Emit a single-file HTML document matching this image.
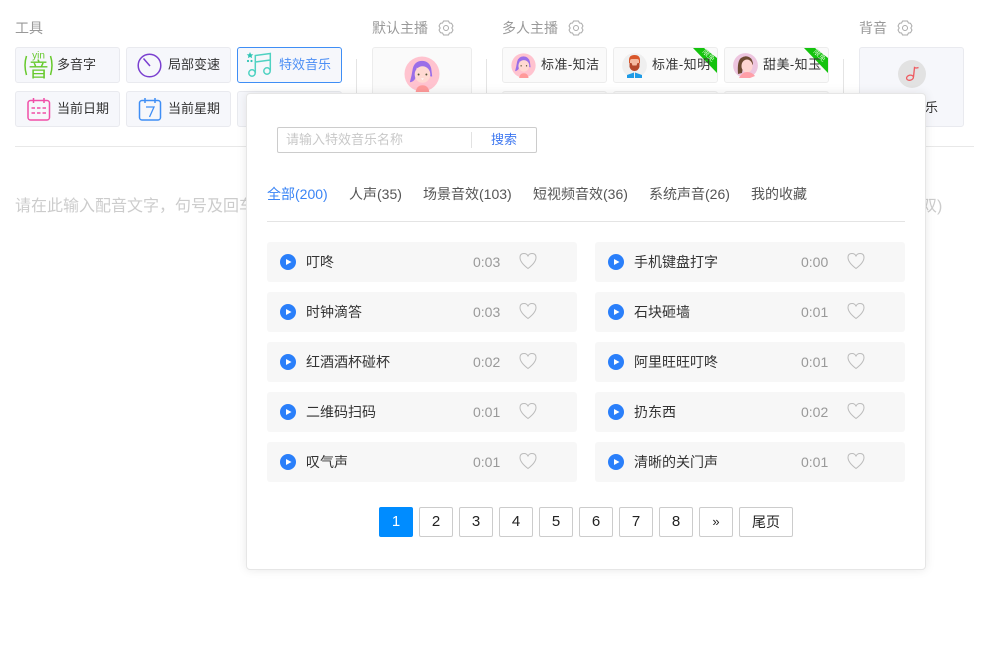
<!DOCTYPE html>
<html lang="zh"><head><meta charset="utf-8"><title>配音</title>
<style>
*{box-sizing:border-box;margin:0;padding:0}
html,body{width:985px;height:660px;background:#fff;overflow:hidden;font-family:"Liberation Sans","Noto Sans CJK SC",sans-serif;font-size:13px;color:#333}
.a{position:absolute}
.t{position:absolute;white-space:nowrap;line-height:20px}
.h{position:absolute;top:18px;font-size:14px;color:#999;line-height:20px;white-space:nowrap}
.c{position:absolute;width:105px;height:36px;background:#f6f7fb;border:1px solid #e9eaef;border-radius:3px}
.c.g{background:#fafafa;border-color:#ececec}
.c span{position:absolute;top:7px;left:41px;line-height:20px;font-size:13px;color:#333;white-space:nowrap;z-index:2}
.c span.n{letter-spacing:.45px}
.c svg{position:absolute}
.v{position:absolute;width:1px;top:59px;height:36px;background:#e4e4e4}
#pop{position:absolute;left:246px;top:93px;width:680px;height:477px;background:#fff;border:1px solid #e6e6e6;border-radius:4px;box-shadow:0 0 10px rgba(0,0,0,.09);z-index:3}
#top{position:absolute;left:0;top:0;width:985px;height:660px;z-index:4}
.tab{position:absolute;top:184px;font-size:14px;line-height:20px;color:#555;white-space:nowrap}
.it{position:absolute;width:310px;height:40px;background:#f7f7f7;border-radius:3px}
.it svg.p{position:absolute;left:13px;top:12px}
.it b{position:absolute;left:39px;top:10px;font-weight:400;font-size:14px;line-height:20px;color:#333;white-space:nowrap}
.it i{position:absolute;left:206px;top:10px;font-style:normal;font-size:14px;line-height:20px;color:#999}
.it svg.l{position:absolute;left:252px;top:10px}
.pg{position:absolute;top:507px;width:34px;height:30px;border:1px solid #ccc;border-radius:2px;text-align:center;line-height:28px;font-size:15px;color:#222;background:#fff}
.rb{position:absolute;right:0;top:0;width:24px;height:26px}
</style></head><body>

<div class="h" style="left:15px">工具</div>
<div class="h" style="left:372px">默认主播</div>
<div class="h" style="left:502px">多人主播</div>
<div class="h" style="left:859px">背音</div>

<svg class="a" style="left:438px;top:20px" width="16" height="16" viewBox="0 0 16 16" fill="none" stroke="#aaa" stroke-linejoin="round"><path d="M5.500 1h5l.9 2 2.100.3L15 6l-1.200 2L15 10l-1.500 2.700-2.100.3-.9 2h-5l-.9-2-2.100-.3L1 10l1.200-2L1 6l1.500-2.700L4.600 3z"/><circle cx="8" cy="8" r="2.500"/></svg>
<svg class="a" style="left:568px;top:20px" width="16" height="16" viewBox="0 0 16 16" fill="none" stroke="#aaa" stroke-linejoin="round"><path d="M5.500 1h5l.9 2 2.100.3L15 6l-1.200 2L15 10l-1.500 2.700-2.100.3-.9 2h-5l-.9-2-2.100-.3L1 10l1.200-2L1 6l1.500-2.700L4.600 3z"/><circle cx="8" cy="8" r="2.500"/></svg>
<svg class="a" style="left:897px;top:20px" width="16" height="16" viewBox="0 0 16 16" fill="none" stroke="#aaa" stroke-linejoin="round"><path d="M5.500 1h5l.9 2 2.100.3L15 6l-1.200 2L15 10l-1.500 2.700-2.100.3-.9 2h-5l-.9-2-2.100-.3L1 10l1.200-2L1 6l1.500-2.700L4.600 3z"/><circle cx="8" cy="8" r="2.500"/></svg>

<!-- tools -->
<div class="c" style="left:15px;top:47px">
<svg style="left:8px;top:3px" width="30" height="30" viewBox="0 0 30 30" fill="none" stroke="#66c92c" stroke-width="1.500"><path d="M2.500 5Q-.5 14 2.500 24M26.500 5Q29.500 14 26.500 24"/><text x="14.500" y="7.500" text-anchor="middle" font-size="10" fill="#66c92c" stroke="none" font-family="Liberation Sans">yin</text><text x="14.500" y="25.500" text-anchor="middle" font-size="20" fill="#66c92c" stroke="none" font-family="Noto Sans CJK SC">音</text></svg>
<span>多音字</span></div>
<div class="c" style="left:126px;top:47px">
<svg style="left:10px;top:5px" width="25" height="25" viewBox="0 0 25 25" fill="none" stroke="#7a3fd0" stroke-width="1.500"><circle cx="12.500" cy="12.500" r="11.300"/><path d="M6.500 5.500l6.500 7.500"/></svg>
<span>局部变速</span></div>
<div class="c" style="left:237px;top:47px;border-color:#3f8ef5">
<svg style="left:8px;top:3px" width="30" height="30" viewBox="0 0 30 30" fill="none" stroke="#4fd2c2" stroke-width="1.500"><circle cx="6" cy="22" r="3.200"/><circle cx="21" cy="20" r="3.200"/><path d="M9.300 22V4.500L24.300 2.500v17M9.300 11l15-2"/><path d="M4 1l1 2.200 2.300.2-1.700 1.500.5 2.200L4 6l-2.100 1.100.5-2.200L.7 3.400 3 3.200z" fill="#2fc4b4" stroke="none"/><circle cx="2" cy="10" r="1.100" fill="#2fc4b4" stroke="none"/><circle cx="5.500" cy="10" r="1.100" fill="#2fc4b4" stroke="none"/></svg>
<span style="color:#4c8ff5">特效音乐</span></div>
<div class="c" style="left:15px;top:91px">
<svg style="left:10px;top:5px" width="26" height="25" viewBox="0 0 26 25" fill="none" stroke="#f04fa8" stroke-width="1.500"><rect x="2" y="3.500" width="21.500" height="19.500" rx="2.500"/><path d="M7.500 1v5M18 1v5"/><path d="M5.500 11h3.500M11 11h3.500M16.500 11h3.500M5.500 16h3.500M11 16h3.500M16.500 16h3.500"/></svg>
<span>当前日期</span></div>
<div class="c" style="left:126px;top:91px">
<svg style="left:11px;top:5px" width="24" height="25" viewBox="0 0 24 25" fill="none" stroke="#3f8ef5" stroke-width="1.500"><rect x="1.500" y="3.500" width="21" height="19.500" rx="2.500"/><path d="M7 1v5M17 1v5"/><path d="M8 10h8l-4.500 10" stroke-width="1.300"/></svg>
<span>当前星期</span></div>
<div class="c" style="left:237px;top:91px"></div>

<div class="v" style="left:356px"></div>
<div class="v" style="left:486px"></div>
<div class="v" style="left:843px"></div>

<!-- default anchor -->
<div class="c g" style="left:372px;top:47px;width:100px;height:80px">
<svg style="left:31px;top:8px" width="36" height="36" viewBox="0 0 37 37"><circle cx="18.500" cy="18.500" r="18" fill="#ffc3cf"/><path d="M6 27Q8 20 9 13Q11 5 18.500 5T28 13L29 21Q25 22 25 14Q18 15 13 12L12 20Q12 26 6 27Z" fill="#9a6ee8"/><ellipse cx="19" cy="19" rx="8" ry="8.500" fill="#ffd9d2"/><path d="M11 13Q15 9 19 9T27 14L27 12Q24 6 18 6T10 14Z" fill="#9a6ee8"/><circle cx="15" cy="19" r="1" fill="#553"/><circle cx="23" cy="19" r="1" fill="#553"/><path d="M17.500 23h3l-1.500 1.500z" fill="#fff"/><path d="M12 37Q13 30 19 30T26 37Z" fill="#ff9a9a"/></svg>
</div>

<!-- multi anchor -->
<div class="c g" style="left:502px;top:47px">
<svg style="left:8px;top:5px" width="25" height="25" viewBox="0 0 37 37"><circle cx="18.500" cy="18.500" r="18" fill="#ffc3cf"/><path d="M6 27Q8 20 9 13Q11 5 18.500 5T28 13L29 21Q25 22 25 14Q18 15 13 12L12 20Q12 26 6 27Z" fill="#9a6ee8"/><ellipse cx="19" cy="19" rx="8" ry="8.500" fill="#ffd9d2"/><path d="M11 13Q15 9 19 9T27 14L27 12Q24 6 18 6T10 14Z" fill="#9a6ee8"/><circle cx="15" cy="19" r="1" fill="#553"/><circle cx="23" cy="19" r="1" fill="#553"/><path d="M12 37Q13 30 19 30T26 37Z" fill="#ff9a9a"/></svg>
<span class="n" style="left:38px">标准-知洁</span></div>
<div class="c g" style="left:613px;top:47px">
<svg style="left:8px;top:5px" width="25" height="25" viewBox="0 0 25 25"><circle cx="12.500" cy="12.500" r="12.400" fill="#efefef"/><path d="M7 7Q7 2 12.500 2T18 7v3H7z" fill="#d9572b"/><rect x="8" y="6" width="9" height="9" rx="2" fill="#f5b9a0"/><path d="M7.500 10h2l1 2.500h4l1-2.500h2v4Q16 18 12.500 18T7.500 14z" fill="#b5472a"/><path d="M5 25v-3l7-2.500V25zM20 25v-3l-7-2.500V25z" fill="#1e9be6"/></svg>
<span class="n" style="left:38px">标准-知明</span>
<svg class="rb" width="24" height="26" viewBox="0 0 24 26"><path d="M0 0H11L24 10V25Z" fill="#14c30e"/><text x="14" y="9" font-size="7" fill="#d8f5d2" transform="rotate(45 14 9)" text-anchor="middle" font-family="Noto Sans CJK SC">限免</text></svg></div>
<div class="c g" style="left:724px;top:47px">
<svg style="left:8px;top:5px" width="25" height="25" viewBox="0 0 25 25"><circle cx="12.500" cy="12.500" r="12.400" fill="#edc5df"/><path d="M5 21Q4 8 8 5T16 4Q20 6 20 12L16 8Q11 10 10 14L9 20Z" fill="#6e4a32"/><ellipse cx="14" cy="13" rx="5.500" ry="6.500" fill="#ffd6d2"/><path d="M6 25Q9 19 14 19T22 23L17 25Z" fill="#ff9fa8"/></svg>
<span class="n" style="left:38px">甜美-知玉</span>
<svg class="rb" width="24" height="26" viewBox="0 0 24 26"><path d="M0 0H11L24 10V25Z" fill="#14c30e"/><text x="14" y="9" font-size="7" fill="#d8f5d2" transform="rotate(45 14 9)" text-anchor="middle" font-family="Noto Sans CJK SC">限免</text></svg></div>
<div class="c g" style="left:502px;top:91px"></div>
<div class="c g" style="left:613px;top:91px"></div>
<div class="c g" style="left:724px;top:91px"></div>

<!-- bgm -->
<div class="c" style="left:859px;top:47px;width:105px;height:80px">
<svg style="left:38px;top:12px" width="28" height="28" viewBox="0 0 28 28"><circle cx="14" cy="14" r="14" fill="#e2e2e2"/><path d="M15.500 17L16.500 7.500Q18 8.500 20.500 7.500" stroke="#ee5a60" stroke-width="1.300" fill="none"/><ellipse cx="12" cy="17.700" rx="3.500" ry="2.500" transform="rotate(-15 12 17.700)" stroke="#ee5a60" stroke-width="1.300" fill="none"/></svg>
<span style="left:26px;top:50px">背景音乐</span></div>

<div class="a" style="left:15px;top:146px;width:959px;height:1px;background:#e8e8e8"></div>
<div class="t" style="left:15px;top:197px;font-size:16px;color:#ccc">请在此输入配音文字，句号及回车键可以产生停顿</div>
<div class="t" style="left:921px;top:197px;font-size:16px;color:#ccc">双)</div>

<div id="pop"></div>

<div id="top">
<div class="a" style="left:277px;top:127px;width:260px;height:26px;border:1px solid #ccc;border-radius:2px;background:#fff"></div>
<div class="t" style="left:286px;top:130px;font-size:13px;color:#c8c8c8">请输入特效音乐名称</div>
<div class="a" style="left:471px;top:132px;width:1px;height:16px;background:#e2e2e2"></div>
<div class="t" style="left:491px;top:130px;font-size:13px;color:#3f78f0">搜索</div>

<div class="tab" style="left:267px;color:#3a84f5">全部(200)</div>
<div class="tab" style="left:349px">人声(35)</div>
<div class="tab" style="left:423px">场景音效(103)</div>
<div class="tab" style="left:533px">短视频音效(36)</div>
<div class="tab" style="left:649px">系统声音(26)</div>
<div class="tab" style="left:751px">我的收藏</div>
<div class="a" style="left:267px;top:221px;width:638px;height:1px;background:#e4e4e4"></div>

<div class="it" style="left:267px;top:242px"><svg class="p" width="16" height="16"><circle cx="8" cy="8" r="8" fill="#2a7ffa"/><path d="M6 5l5.500 3L6 11z" fill="#fff"/></svg><b>叮咚</b><i>0:03</i><svg class="l" width="18" height="18" viewBox="0 0 18 18" fill="none" stroke="#bbb"><path d="M9 16.500Q1 10.500 1 5.500 1 1.500 5 1.500 7.800 1.500 9 4 10.200 1.500 13 1.500 17 1.500 17 5.500 17 10.500 9 16.500z"/></svg></div>
<div class="it" style="left:595px;top:242px"><svg class="p" width="16" height="16"><circle cx="8" cy="8" r="8" fill="#2a7ffa"/><path d="M6 5l5.500 3L6 11z" fill="#fff"/></svg><b>手机键盘打字</b><i>0:00</i><svg class="l" width="18" height="18" viewBox="0 0 18 18" fill="none" stroke="#bbb"><path d="M9 16.500Q1 10.500 1 5.500 1 1.500 5 1.500 7.800 1.500 9 4 10.200 1.500 13 1.500 17 1.500 17 5.500 17 10.500 9 16.500z"/></svg></div>
<div class="it" style="left:267px;top:292px"><svg class="p" width="16" height="16"><circle cx="8" cy="8" r="8" fill="#2a7ffa"/><path d="M6 5l5.500 3L6 11z" fill="#fff"/></svg><b>时钟滴答</b><i>0:03</i><svg class="l" width="18" height="18" viewBox="0 0 18 18" fill="none" stroke="#bbb"><path d="M9 16.500Q1 10.500 1 5.500 1 1.500 5 1.500 7.800 1.500 9 4 10.200 1.500 13 1.500 17 1.500 17 5.500 17 10.500 9 16.500z"/></svg></div>
<div class="it" style="left:595px;top:292px"><svg class="p" width="16" height="16"><circle cx="8" cy="8" r="8" fill="#2a7ffa"/><path d="M6 5l5.500 3L6 11z" fill="#fff"/></svg><b>石块砸墙</b><i>0:01</i><svg class="l" width="18" height="18" viewBox="0 0 18 18" fill="none" stroke="#bbb"><path d="M9 16.500Q1 10.500 1 5.500 1 1.500 5 1.500 7.800 1.500 9 4 10.200 1.500 13 1.500 17 1.500 17 5.500 17 10.500 9 16.500z"/></svg></div>
<div class="it" style="left:267px;top:342px"><svg class="p" width="16" height="16"><circle cx="8" cy="8" r="8" fill="#2a7ffa"/><path d="M6 5l5.500 3L6 11z" fill="#fff"/></svg><b>红酒酒杯碰杯</b><i>0:02</i><svg class="l" width="18" height="18" viewBox="0 0 18 18" fill="none" stroke="#bbb"><path d="M9 16.500Q1 10.500 1 5.500 1 1.500 5 1.500 7.800 1.500 9 4 10.200 1.500 13 1.500 17 1.500 17 5.500 17 10.500 9 16.500z"/></svg></div>
<div class="it" style="left:595px;top:342px"><svg class="p" width="16" height="16"><circle cx="8" cy="8" r="8" fill="#2a7ffa"/><path d="M6 5l5.500 3L6 11z" fill="#fff"/></svg><b>阿里旺旺叮咚</b><i>0:01</i><svg class="l" width="18" height="18" viewBox="0 0 18 18" fill="none" stroke="#bbb"><path d="M9 16.500Q1 10.500 1 5.500 1 1.500 5 1.500 7.800 1.500 9 4 10.200 1.500 13 1.500 17 1.500 17 5.500 17 10.500 9 16.500z"/></svg></div>
<div class="it" style="left:267px;top:392px"><svg class="p" width="16" height="16"><circle cx="8" cy="8" r="8" fill="#2a7ffa"/><path d="M6 5l5.500 3L6 11z" fill="#fff"/></svg><b>二维码扫码</b><i>0:01</i><svg class="l" width="18" height="18" viewBox="0 0 18 18" fill="none" stroke="#bbb"><path d="M9 16.500Q1 10.500 1 5.500 1 1.500 5 1.500 7.800 1.500 9 4 10.200 1.500 13 1.500 17 1.500 17 5.500 17 10.500 9 16.500z"/></svg></div>
<div class="it" style="left:595px;top:392px"><svg class="p" width="16" height="16"><circle cx="8" cy="8" r="8" fill="#2a7ffa"/><path d="M6 5l5.500 3L6 11z" fill="#fff"/></svg><b>扔东西</b><i>0:02</i><svg class="l" width="18" height="18" viewBox="0 0 18 18" fill="none" stroke="#bbb"><path d="M9 16.500Q1 10.500 1 5.500 1 1.500 5 1.500 7.800 1.500 9 4 10.200 1.500 13 1.500 17 1.500 17 5.500 17 10.500 9 16.500z"/></svg></div>
<div class="it" style="left:267px;top:442px"><svg class="p" width="16" height="16"><circle cx="8" cy="8" r="8" fill="#2a7ffa"/><path d="M6 5l5.500 3L6 11z" fill="#fff"/></svg><b>叹气声</b><i>0:01</i><svg class="l" width="18" height="18" viewBox="0 0 18 18" fill="none" stroke="#bbb"><path d="M9 16.500Q1 10.500 1 5.500 1 1.500 5 1.500 7.800 1.500 9 4 10.200 1.500 13 1.500 17 1.500 17 5.500 17 10.500 9 16.500z"/></svg></div>
<div class="it" style="left:595px;top:442px"><svg class="p" width="16" height="16"><circle cx="8" cy="8" r="8" fill="#2a7ffa"/><path d="M6 5l5.500 3L6 11z" fill="#fff"/></svg><b>清晰的关门声</b><i>0:01</i><svg class="l" width="18" height="18" viewBox="0 0 18 18" fill="none" stroke="#bbb"><path d="M9 16.500Q1 10.500 1 5.500 1 1.500 5 1.500 7.800 1.500 9 4 10.200 1.500 13 1.500 17 1.500 17 5.500 17 10.500 9 16.500z"/></svg></div>

<div class="pg" style="left:379px;background:#008cff;border-color:#008cff;color:#fff">1</div>
<div class="pg" style="left:419px">2</div>
<div class="pg" style="left:459px">3</div>
<div class="pg" style="left:499px">4</div>
<div class="pg" style="left:539px">5</div>
<div class="pg" style="left:579px">6</div>
<div class="pg" style="left:619px">7</div>
<div class="pg" style="left:659px">8</div>
<div class="pg" style="left:699px;font-size:13px">»</div>
<div class="pg" style="left:739px;width:54px;font-size:14px">尾页</div>
</div>
</body></html>
